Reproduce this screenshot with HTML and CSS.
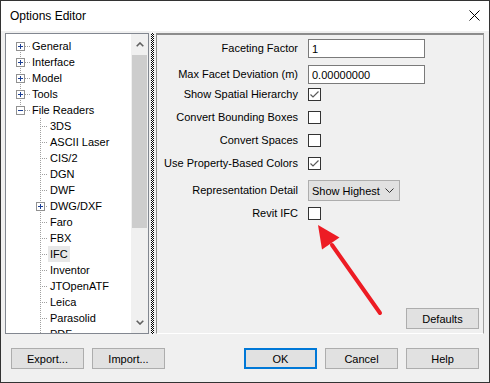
FILE: index.html
```html
<!DOCTYPE html>
<html lang="en">
<head>
  <meta charset="UTF-8" />
  <title>Options Editor</title>
  <link rel="stylesheet" href="styles.css">
</head>
<body>
  <div class="window">
    <div class="titlebar">
      <span>Options Editor</span>
      <svg class="close" width="11" height="11" viewBox="0 0 11 11"><path d="M0.5 0.5L10.5 10.5M10.5 0.5L0.5 10.5" stroke="#000" fill="none"/></svg>
    </div>

    <div class="main">
      <div class="tree">
        <div class="tree-items">
          <div class="node top first"><svg class="exp" width="9" height="9"><rect x=".5" y=".5" width="8" height="8" fill="#fff" stroke="#919191"/><path d="M2 4.5h5M4.5 2v5" stroke="#1c3f94"/></svg><span class="lbl">General</span></div>
          <div class="node top"><svg class="exp" width="9" height="9"><rect x=".5" y=".5" width="8" height="8" fill="#fff" stroke="#919191"/><path d="M2 4.5h5M4.5 2v5" stroke="#1c3f94"/></svg><span class="lbl">Interface</span></div>
          <div class="node top"><svg class="exp" width="9" height="9"><rect x=".5" y=".5" width="8" height="8" fill="#fff" stroke="#919191"/><path d="M2 4.5h5M4.5 2v5" stroke="#1c3f94"/></svg><span class="lbl">Model</span></div>
          <div class="node top"><svg class="exp" width="9" height="9"><rect x=".5" y=".5" width="8" height="8" fill="#fff" stroke="#919191"/><path d="M2 4.5h5M4.5 2v5" stroke="#1c3f94"/></svg><span class="lbl">Tools</span></div>
          <div class="node top last"><svg class="exp" width="9" height="9"><rect x=".5" y=".5" width="8" height="8" fill="#fff" stroke="#919191"/><path d="M2 4.5h5" stroke="#1c3f94"/></svg><span class="lbl">File Readers</span></div>
          <div class="node child"><i class="slot"></i><span class="lbl">3DS</span></div>
          <div class="node child"><i class="slot"></i><span class="lbl">ASCII Laser</span></div>
          <div class="node child"><i class="slot"></i><span class="lbl">CIS/2</span></div>
          <div class="node child"><i class="slot"></i><span class="lbl">DGN</span></div>
          <div class="node child"><i class="slot"></i><span class="lbl">DWF</span></div>
          <div class="node child"><svg class="exp" width="9" height="9"><rect x=".5" y=".5" width="8" height="8" fill="#fff" stroke="#919191"/><path d="M2 4.5h5M4.5 2v5" stroke="#1c3f94"/></svg><span class="lbl">DWG/DXF</span></div>
          <div class="node child"><i class="slot"></i><span class="lbl">Faro</span></div>
          <div class="node child"><i class="slot"></i><span class="lbl">FBX</span></div>
          <div class="node child"><i class="slot"></i><span class="lbl selected">IFC</span></div>
          <div class="node child"><i class="slot"></i><span class="lbl">Inventor</span></div>
          <div class="node child"><i class="slot"></i><span class="lbl">JTOpenATF</span></div>
          <div class="node child"><i class="slot"></i><span class="lbl">Leica</span></div>
          <div class="node child"><i class="slot"></i><span class="lbl">Parasolid</span></div>
          <div class="node child"><i class="slot"></i><span class="lbl">PDF</span></div>
        </div>
        <div class="scrollbar">
          <div class="scroll-btn"><svg width="8" height="5" viewBox="0 0 8 5"><polyline points="0.7,4.3 4,1 7.3,4.3" fill="none" stroke="#606060" stroke-width="1.6"/></svg></div>
          <div class="thumb"></div>
          <div class="track"></div>
          <div class="scroll-btn"><svg width="8" height="5" viewBox="0 0 8 5"><polyline points="0.7,0.7 4,4 7.3,0.7" fill="none" stroke="#606060" stroke-width="1.6"/></svg></div>
        </div>
      </div>

      <div class="splitter"></div>

      <div class="panel">
        <div class="fields">
          <div class="field first">
            <label>Faceting Factor</label>
            <input class="textbox" type="text" value="1">
          </div>
          <div class="field second">
            <label>Max Facet Deviation (m)</label>
            <input class="textbox" type="text" value="0.00000000">
          </div>
          <div class="field third">
            <label>Show Spatial Hierarchy</label>
            <span class="check"><svg width="11" height="11" viewBox="0 0 11 11"><polyline points="1.5,5.5 4,8 9.5,2.5" fill="none" stroke="#5a5a5a" stroke-width="1.2"/></svg></span>
          </div>
          <div class="field">
            <label>Convert Bounding Boxes</label>
            <span class="check"></span>
          </div>
          <div class="field">
            <label>Convert Spaces</label>
            <span class="check"></span>
          </div>
          <div class="field">
            <label>Use Property-Based Colors</label>
            <span class="check"><svg width="11" height="11" viewBox="0 0 11 11"><polyline points="1.5,5.5 4,8 9.5,2.5" fill="none" stroke="#5a5a5a" stroke-width="1.2"/></svg></span>
          </div>
          <div class="field">
            <label>Representation Detail</label>
            <div class="dropdown">
              <span>Show Highest</span>
              <svg width="9" height="5" viewBox="0 0 9 5"><polyline points="0.5,0.5 4.5,4.5 8.5,0.5" fill="none" stroke="#333"/></svg>
            </div>
          </div>
          <div class="field last">
            <label>Revit IFC</label>
            <span class="check"></span>
          </div>
        </div>
        <button class="btn defaults">Defaults</button>
      </div>
    </div>

    <div class="footer">
      <div class="btn-group">
        <button class="btn">Export...</button>
        <button class="btn">Import...</button>
      </div>
      <div class="btn-group">
        <button class="btn default">OK</button>
        <button class="btn">Cancel</button>
        <button class="btn">Help</button>
      </div>
    </div>

    <!-- red pointer drawn over the dialog -->
    <svg class="arrow" width="490" height="383" viewBox="0 0 490 383">
      <line x1="380" y1="313" x2="332" y2="245" stroke="#ed1c24" stroke-width="4" stroke-linecap="round"/>
      <polygon points="318,225 339.5,237.5 322,249.5" fill="#ed1c24"/>
    </svg>
  </div>
</body>
</html>
```

FILE: styles.css
```css
body {
  margin: 0;
  font-family: "Liberation Sans", Arial, sans-serif;
  font-size: 11px;
  color: #000;
}
.window {
  position: relative;
  width: 490px;
  height: 383px;
  box-sizing: border-box;
  border: 1px solid #333;
  background: #f0f0f0;
  display: flex;
  flex-direction: column;
}
.titlebar {
  height: 30px;
  flex: none;
  background: #fff;
  display: flex;
  align-items: center;
  justify-content: space-between;
  padding: 0 9px 1px 9px;
  box-sizing: border-box;
  font-size: 12px;
}
.main {
  height: 301px;
  flex: none;
  margin-top: 2px;
  padding: 0 5px 0 4px;
  display: flex;
}

/* tree */
.tree {
  width: 144px;
  flex: none;
  box-sizing: border-box;
  border: 1px solid #828790;
  background: #fff;
  display: flex;
}
.tree-items {
  flex: 1;
  overflow: hidden;
  padding-top: 4px;
}
.node {
  height: 16px;
  display: flex;
  align-items: center;
  line-height: 16px;
  white-space: nowrap;
}
.node.top {
  padding-left: 10px;
  background:
    repeating-linear-gradient(to bottom, #a0a0a0 0 1px, transparent 1px 2px) 14px 0 / 1px 16px no-repeat,
    repeating-linear-gradient(to right, #a0a0a0 0 1px, transparent 1px 2px) 19px 8px / 5px 1px no-repeat;
}
.node.top.first {
  background-position: 14px 8px, 19px 8px;
  background-size: 1px 8px, 5px 1px;
}
.node.top.last {
  background-size: 1px 8px, 5px 1px;
}
.node.top .exp {
  margin-right: 5px;
}
.node.child {
  padding-left: 30px;
  background:
    repeating-linear-gradient(to bottom, #a0a0a0 0 1px, transparent 1px 2px) 34px 0 / 1px 16px no-repeat,
    repeating-linear-gradient(to right, #a0a0a0 0 1px, transparent 1px 2px) 36px 8px / 6px 1px no-repeat;
}
.node.child .exp,
.node.child .slot {
  margin-right: 3px;
}
.exp {
  flex: none;
  display: block;
}
.slot {
  width: 9px;
  height: 9px;
  flex: none;
}
.lbl {
  padding: 0 2px;
}
.lbl.selected {
  background: #e8e8e8;
}

.scrollbar {
  width: 17px;
  flex: none;
  background: #f0f0f0;
  display: flex;
  flex-direction: column;
}
.scroll-btn {
  height: 21px;
  display: flex;
  align-items: center;
  justify-content: center;
}
.thumb {
  height: 173px;
  margin: 0 1px;
  background: #cdcdcd;
}
.track {
  flex: 1;
}

.splitter {
  width: 3px;
  flex: none;
  margin: 0 2px;
  background: repeating-conic-gradient(#000 0 25%, #fff 0 50%) 0 0 / 2px 2px;
}

/* options panel */
.panel {
  flex: 1;
  display: flex;
  flex-direction: column;
  border-style: solid;
  border-width: 2px 1px 1px 1px;
  border-color: #8c8c8c #a0a0a0 #fff #8c8c8c;
}
.fields {
  display: flex;
  flex-direction: column;
}
.field {
  display: flex;
  align-items: center;
  margin-top: 10px;
}
.field.first {
  margin-top: 4px;
}
.field.second {
  margin-top: 7px;
}
.field.third {
  margin-top: 4px;
}
.field.last {
  margin-top: 6px;
}
.field label {
  width: 141px;
  margin-right: 10px;
  text-align: right;
  line-height: 13px;
  white-space: nowrap;
}
.textbox {
  width: 117px;
  height: 19px;
  box-sizing: border-box;
  margin: 0;
  padding: 0 3px;
  border: 1px solid #7a7a7a;
  background: #fff;
  font: inherit;
  color: #000;
}
.check {
  width: 13px;
  height: 13px;
  box-sizing: border-box;
  border: 1px solid #333;
  background: #fff;
  display: flex;
}
.dropdown {
  width: 92px;
  height: 21px;
  box-sizing: border-box;
  border: 1px solid #adadad;
  background: #e1e1e1;
  display: flex;
  align-items: center;
  justify-content: space-between;
  padding: 0 5px 0 3px;
}

.btn {
  width: 73px;
  height: 21px;
  box-sizing: border-box;
  margin: 0;
  padding: 0;
  border: 1px solid #adadad;
  background: #e1e1e1;
  font: inherit;
  color: #000;
}
.btn.default {
  border: 2px solid #0078d7;
}
.defaults {
  margin: auto 4px 4px 0;
  align-self: flex-end;
}

.footer {
  display: flex;
  justify-content: space-between;
  padding: 14px 10px 0 10px;
}
.btn-group {
  display: flex;
  gap: 8px;
}

.arrow {
  position: absolute;
  left: -1px;
  top: -1px;
  pointer-events: none;
}
```
